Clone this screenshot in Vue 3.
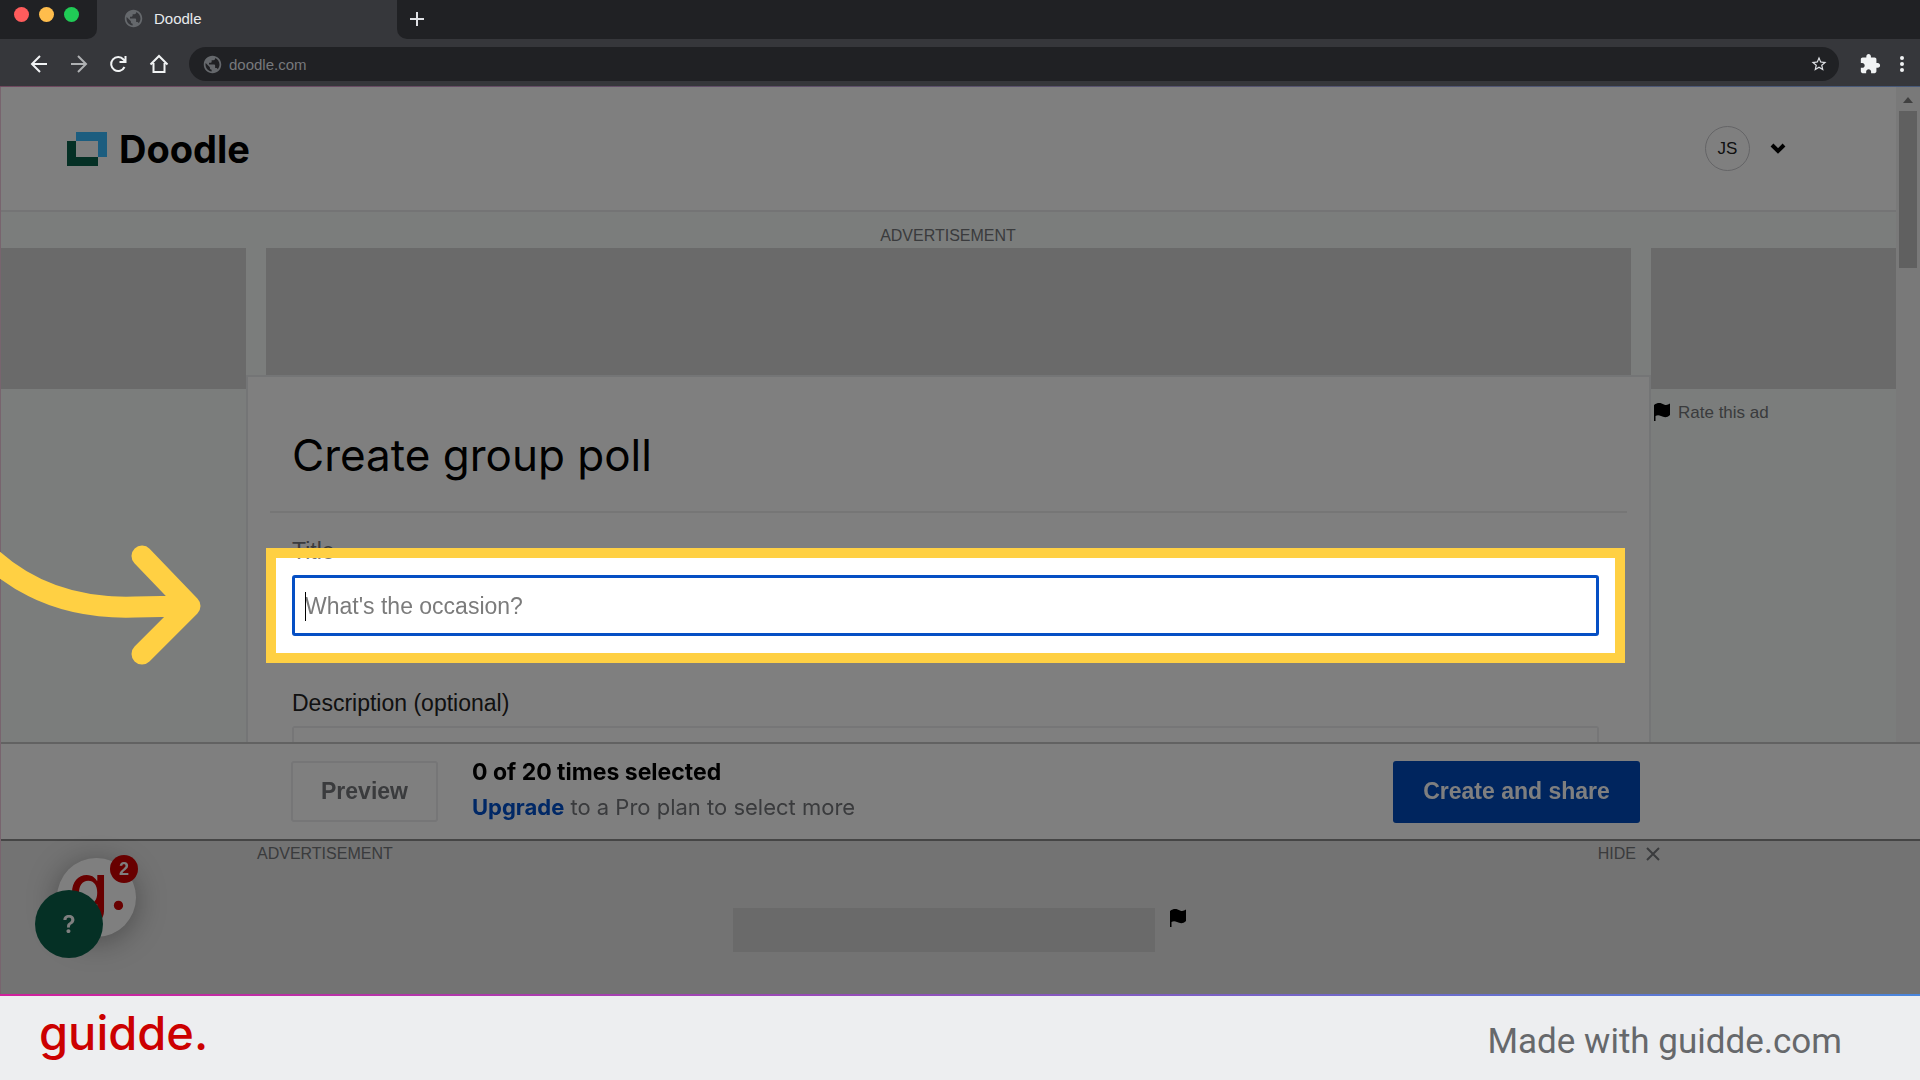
<script setup>
/**
 * Guide step: group poll form inside a browser frame
 */
import { ref } from 'vue'

const title = ref('')
const description = ref('')
const url = ref('doodle.com')

const globePath =
  'M12 2C6.48 2 2 6.48 2 12s4.48 10 10 10 10-4.48 10-10S17.52 2 12 2zm-1 17.93c-3.95-.49-7-3.85-7-7.93 0-.62.08-1.21.21-1.79L9 15v1c0 1.1.9 2 2 2v1.93zm6.9-2.54c-.26-.81-1-1.39-1.9-1.39h-1v-3c0-.55-.45-1-1-1H8v-2h2c.55 0 1-.45 1-1V7h2c1.1 0 2-.9 2-2v-.41c2.93 1.19 5 4.06 5 7.41 0 2.08-.8 3.97-2.1 5.39z'
const flagPath = 'M1 3C5 0 8 1 11 2.500C13 3.500 15 3 17 1.500V13C14 16 11 15.500 8 14C6 13 4 13 2.500 14V19H1Z'
</script>

<template>
  <div class="frame">
    <div class="tabs">
      <div class="lights">
        <span class="light red"></span>
        <span class="light yellow"></span>
        <span class="light green"></span>
      </div>
      <div class="tab">
        <svg class="globe" viewBox="0 0 24 24"><path :d="globePath" /></svg>
        <span>Doodle</span>
      </div>
      <div class="tabs-rest">
        <button class="icon-btn" aria-label="New tab">
          <svg width="16" height="16" viewBox="0 0 16 16"><path d="M8 1v14M1 8h14" stroke="#dfe1e5" stroke-width="2" /></svg>
        </button>
      </div>
    </div>

    <div class="toolbar">
      <nav class="nav">
        <button class="icon-btn" aria-label="Back">
          <svg width="20" height="20" viewBox="0 0 20 20"><path d="M18 10H3M11 2L3 10l8 8" class="line" /></svg>
        </button>
        <button class="icon-btn faded" aria-label="Forward">
          <svg width="20" height="20" viewBox="0 0 20 20"><path d="M2 10h15M9 2l8 8-8 8" class="line" /></svg>
        </button>
        <button class="icon-btn" aria-label="Reload">
          <svg width="20" height="20" viewBox="0 0 20 20"><path d="M15.500 13A7 7 0 1 1 14.500 5.500L16 7M16.500 2v6h-6" class="line" /></svg>
        </button>
        <button class="icon-btn" aria-label="Home">
          <svg width="20" height="20" viewBox="0 0 20 20"><path d="M1.500 10.500L10 2l8.500 8.500M4.500 9v9h11V9" class="line" /></svg>
        </button>
      </nav>
      <div class="address">
        <svg class="globe" viewBox="0 0 24 24"><path :d="globePath" /></svg>
        <input v-model="url" class="url" type="text" aria-label="Address" />
        <svg width="18" height="18" viewBox="0 0 24 24" fill="#dfe1e5">
          <path d="M22 9.240l-7.190-.62L12 2 9.190 8.630 2 9.240l5.460 4.730L5.820 21 12 17.270 18.180 21l-1.630-7.030L22 9.240zM12 15.400l-3.760 2.270 1-4.280-3.320-2.880 4.380-.38L12 6.100l1.710 4.040 4.380.38-3.320 2.880 1 4.280L12 15.400z" />
        </svg>
      </div>
      <svg class="extension" width="22" height="22" viewBox="0 0 24 24">
        <path d="M20.500 11H19V7c0-1.100-.9-2-2-2h-4V3.500C13 2.120 11.880 1 10.500 1S8 2.120 8 3.500V5H4c-1.100 0-1.990.9-1.990 2v3.800H3.500c1.490 0 2.700 1.210 2.700 2.700s-1.210 2.700-2.700 2.700H2V20c0 1.100.9 2 2 2h3.800v-1.500c0-1.490 1.210-2.700 2.700-2.700s2.700 1.210 2.700 2.700V22H17c1.100 0 2-.9 2-2v-4h1.500c1.380 0 2.500-1.120 2.500-2.500S21.880 11 20.500 11z" />
      </svg>
      <svg class="dots" width="6" height="18" viewBox="0 0 6 18">
        <circle cx="3" cy="3" r="2" /><circle cx="3" cy="9" r="2" /><circle cx="3" cy="15" r="2" />
      </svg>
    </div>

    <div class="viewport">
      <div class="scroller">
        <div class="page">
          <header class="header">
            <div class="brand">
              <svg width="40" height="34" viewBox="0 0 40 34">
                <path d="M0 9h9v16h22v9H0z" fill="#0a604a" />
                <path d="M9 0h31v25h-9V9H9z" fill="#38baff" />
              </svg>
              <span>Doodle</span>
            </div>
            <button class="account">
              <span class="avatar">JS</span>
              <svg width="16" height="12" viewBox="0 0 16 12"><path d="M2 2l6 6 6-6" fill="none" stroke="#000" stroke-width="4" /></svg>
            </button>
          </header>

          <div class="body">
            <div class="ad-label">ADVERTISEMENT</div>
            <div class="columns">
              <aside class="side">
                <div class="ad side-ad"></div>
              </aside>
              <main class="main">
                <div class="ad banner"></div>
                <form class="card" @submit.prevent>
                  <h1>Create group poll</h1>
                  <div class="fields">
                    <label class="label muted" for="title">Title</label>
                    <div class="title-box">
                      <input id="title" v-model="title" class="input" type="text" placeholder="What's the occasion?" />
                      <span class="caret"></span>
                      <div class="highlight"></div>
                    </div>
                    <label class="label" for="description">Description (optional)</label>
                    <textarea id="description" v-model="description" class="textarea"></textarea>
                  </div>
                </form>
              </main>
              <aside class="side">
                <div class="ad side-ad"></div>
                <a href="#" class="rate">
                  <svg width="18" height="19" viewBox="0 0 18 19"><path :d="flagPath" /></svg>
                  <span>Rate this ad</span>
                </a>
              </aside>
            </div>
          </div>
        </div>
        <div class="scrollbar">
          <svg width="10" height="6" viewBox="0 0 10 6"><path d="M0 6l5-6 5 6z" fill="#808080" /></svg>
          <div class="thumb"></div>
        </div>
      </div>

      <div class="actions">
        <button class="preview">Preview</button>
        <div class="status">
          <strong>0 of 20 times selected</strong>
          <span class="plan"><a href="#">Upgrade</a> to a Pro plan to select more</span>
        </div>
        <button class="create">Create and share</button>
      </div>

      <div class="bottom-ad">
        <div class="bottom-row">
          <span>ADVERTISEMENT</span>
          <button class="hide">
            <span>HIDE</span>
            <svg width="14" height="14" viewBox="0 0 14 14"><path d="M1 1l12 12M13 1L1 13" stroke="#74767a" stroke-width="2" /></svg>
          </button>
        </div>
        <div class="bottom-slot">
          <div class="ad small-ad"></div>
          <svg width="18" height="19" viewBox="0 0 18 19"><path :d="flagPath" /></svg>
        </div>
        <div class="bubble">g.</div>
        <span class="badge">2</span>
        <button class="help" aria-label="Help">?</button>
      </div>

      <svg class="arrow" width="210" height="140" viewBox="0 0 210 140">
        <path d="M-12 20Q46 75 135 72L188 71M142 21l48 50-48 48" />
      </svg>
    </div>

    <footer class="footer">
      <span class="guidde">guidde.</span>
      <span class="made">Made with guidde.com</span>
    </footer>
  </div>
</template>

<style>
body {
  background: #edeef0;
}
</style>

<style scoped>
* {
  box-sizing: border-box;
}

.frame {
  min-height: 100vh;
  display: flex;
  flex-direction: column;
  font-family: "Liberation Sans", sans-serif;
}

button {
  font-family: inherit;
  cursor: pointer;
}

svg {
  display: block;
  flex-shrink: 0;
}

/* browser chrome */
.tabs {
  display: flex;
  height: 39px;
  background: #36373b;
}

.lights {
  display: flex;
  gap: 10px;
  width: 97px;
  padding: 7px 0 0 14px;
  background: #202124;
  border-bottom-right-radius: 10px;
}

.light {
  width: 15px;
  height: 15px;
  border-radius: 50%;
}

.light.red {
  background: #ff5c5c;
}

.light.yellow {
  background: #ffbd4c;
}

.light.green {
  background: #20cb56;
}

.tab {
  display: flex;
  align-items: center;
  gap: 10px;
  width: 300px;
  padding: 0 0 2px 26px;
  color: #e8eaed;
  font-size: 15px;
}

.globe {
  width: 21px;
  height: 21px;
  fill: #65686c;
}

.tabs-rest {
  flex: 1;
  padding: 11px 12px;
  background: #202124;
  border-bottom-left-radius: 10px;
}

.icon-btn {
  display: block;
  padding: 0;
  border: 0;
  background: none;
}

.faded {
  opacity: 0.65;
}

.line {
  fill: none;
  stroke: #f1f3f4;
  stroke-width: 2;
}

.toolbar {
  display: flex;
  align-items: center;
  height: 48px;
  padding: 2px 15px 0 29px;
  background: linear-gradient(90deg, #70485f, #485a7a) bottom / 100% 1px no-repeat #36373b;
}

.nav {
  display: flex;
  gap: 20px;
  margin-right: 20px;
}

.address {
  display: flex;
  flex: 1;
  align-items: center;
  gap: 6px;
  height: 34px;
  padding: 0 11px 0 13px;
  border-radius: 17px;
  background: #202124;
}

.url {
  flex: 1;
  padding: 0;
  border: 0;
  outline: 0;
  background: none;
  color: #77797c;
  font: 15px "Liberation Sans", sans-serif;
}

.extension {
  margin: 0 18px 0 20px;
  fill: #f1f3f4;
}

.dots {
  fill: #f1f3f4;
}

/* page, dimmed by the shadow of .highlight */
.viewport {
  position: relative;
  display: flex;
  flex: 1;
  flex-direction: column;
  overflow: hidden;
  background: #fff;
}

.viewport::before {
  content: "";
  position: absolute;
  z-index: 1;
  inset: 0 auto 0 0;
  width: 1px;
  background: #f0c8dc;
}

.scroller {
  display: flex;
  flex: 1;
}

.page {
  display: flex;
  flex: 1;
  flex-direction: column;
}

.header {
  display: flex;
  align-items: center;
  justify-content: space-between;
  height: 125px;
  padding: 0 110px 0 67px;
  border-bottom: 2px solid #e8e8ea;
}

.brand {
  display: flex;
  align-items: center;
  gap: 12px;
  font: 700 38px/44px Inter, sans-serif;
}

.account {
  display: flex;
  align-items: center;
  gap: 20px;
  padding: 0;
  border: 0;
  background: none;
}

.avatar {
  width: 45px;
  height: 45px;
  border: 1px solid #c8c8cc;
  border-radius: 50%;
  color: #222;
  font: 17px/43px "Liberation Sans", sans-serif;
}

.body {
  display: flex;
  flex: 1;
  flex-direction: column;
  background: #f6fbf9;
}

.ad-label {
  height: 36px;
  color: #74767a;
  font-size: 16px;
  line-height: 48px;
  text-align: center;
}

.columns {
  display: grid;
  flex: 1;
  grid-template-columns: 246px 1fr 245px;
}

.ad {
  background: #d4d4d4;
}

.side-ad {
  height: 141px;
}

.rate {
  display: flex;
  gap: 7px;
  padding: 13px 0 0 2px;
  color: #74767a;
  font-size: 17px;
  line-height: 21px;
  text-decoration: none;
}

.main {
  display: flex;
  flex-direction: column;
}

.banner {
  height: 127px;
  margin: 0 20px;
}

.card {
  display: flex;
  flex: 1;
  flex-direction: column;
  padding: 50px 22px 0;
  border: solid #e8eaec;
  border-width: 2px 2px 0;
  background: #fff;
}

h1 {
  margin: 0;
  padding: 0 22px 28px;
  border-bottom: 2px solid #ececec;
  font: 400 44px/56px Inter, sans-serif;
}

.fields {
  display: flex;
  flex: 1;
  flex-direction: column;
  padding: 24px 28px 0 22px;
}

.label {
  color: #222;
  font-size: 23px;
  line-height: 28px;
}

.label.muted {
  color: #74767a;
}

.title-box {
  position: relative;
  margin: 10px 0 53px;
}

.input {
  display: block;
  width: 100%;
  height: 61px;
  padding: 1px 10px 0;
  border: 3px solid #054fc4;
  border-radius: 3px;
  outline: 0;
  font: 23px "Liberation Sans", sans-serif;
}

.input::placeholder {
  color: #7b7b7b;
  opacity: 1;
}

.caret {
  position: absolute;
  top: 17px;
  left: 13px;
  width: 1px;
  height: 29px;
  background: #000;
}

.highlight {
  position: absolute;
  z-index: 5;
  inset: -27px -26px;
  border: 10px solid #ffd043;
  box-shadow: 0 0 0 4000px rgba(0, 0, 0, 0.5);
  pointer-events: none;
}

.textarea {
  flex: 1 0 16px;
  margin-top: 9px;
  padding: 0;
  border: solid #ececee;
  border-width: 2px 2px 0;
  border-radius: 3px 3px 0 0;
  outline: 0;
  resize: none;
}

.scrollbar {
  display: flex;
  flex-direction: column;
  align-items: center;
  gap: 8px;
  width: 24px;
  padding-top: 10px;
  background: #f3f3f3;
}

.thumb {
  width: 18px;
  height: 157px;
  background: #c1c1c1;
}

.actions {
  display: flex;
  align-items: center;
  height: 99px;
  padding: 0 280px 0 291px;
  border-top: 2px solid #c4c4c4;
  border-bottom: 2px solid #8a8a8a;
}

.preview {
  width: 147px;
  height: 61px;
  border: 2px solid #ececee;
  border-radius: 3px;
  background: #fff;
  color: #74767a;
  font-size: 23px;
  font-weight: 700;
}

.status {
  display: flex;
  flex: 1;
  flex-direction: column;
  margin-left: 34px;
  padding-bottom: 4px;
  font: 22px/35px Inter, sans-serif;
}

.status strong {
  font-size: 23px;
}

.plan {
  color: #74767a;
}

.plan a {
  color: #0050cc;
  font-weight: 700;
  text-decoration: none;
}

.create {
  width: 247px;
  height: 62px;
  border: 0;
  border-radius: 3px;
  background: #004abc;
  color: #fff;
  font-size: 23px;
  font-weight: 700;
}

.bottom-ad {
  position: relative;
  height: 153px;
  background: #e6e6e6;
}

.bottom-row {
  display: flex;
  justify-content: space-between;
  padding: 2px 260px 0 257px;
  color: #74767a;
  font-size: 16px;
  line-height: 22px;
}

.hide {
  display: flex;
  align-items: center;
  gap: 10px;
  padding: 0;
  border: 0;
  background: none;
  color: inherit;
  font-size: 16px;
}

.bottom-slot {
  display: flex;
  gap: 14px;
  justify-content: center;
  margin-top: 43px;
}

.small-ad {
  width: 422px;
  height: 44px;
}

.bubble {
  position: absolute;
  top: 17px;
  left: 57px;
  width: 79px;
  height: 79px;
  padding-left: 4px;
  border-radius: 50%;
  background: #fff;
  box-shadow: 0 4px 30px rgba(0, 0, 0, 0.35);
  color: #d00000;
  font: 500 64px/58px Inter, sans-serif;
  text-align: center;
}

.badge {
  position: absolute;
  top: 14px;
  left: 110px;
  width: 28px;
  height: 28px;
  border-radius: 50%;
  background: #d00000;
  color: #fff;
  font-size: 18px;
  font-weight: 700;
  line-height: 28px;
  text-align: center;
}

.help {
  position: absolute;
  top: 49px;
  left: 35px;
  width: 68px;
  height: 68px;
  padding: 0;
  border: 0;
  border-radius: 50%;
  background: #0a604a;
  color: #fff;
  font: 600 24px Inter, sans-serif;
}

.arrow {
  position: absolute;
  z-index: 6;
  top: 448px;
  left: 0;
}

.arrow path {
  fill: none;
  stroke: #ffd043;
  stroke-width: 21;
  stroke-linecap: round;
  stroke-linejoin: round;
}

.footer {
  display: flex;
  align-items: center;
  justify-content: space-between;
  height: 87px;
  padding: 0 78px 0 39px;
  background: linear-gradient(90deg, #d0209c, #4a86dc) top / 100% 2px no-repeat #edeef0;
}

.guidde {
  padding-bottom: 10px;
  color: #c00;
  font: 500 47px/60px Inter, sans-serif;
}

.made {
  padding-top: 8px;
  color: #66686b;
  font: 35px/44px Roboto, sans-serif;
}
</style>
